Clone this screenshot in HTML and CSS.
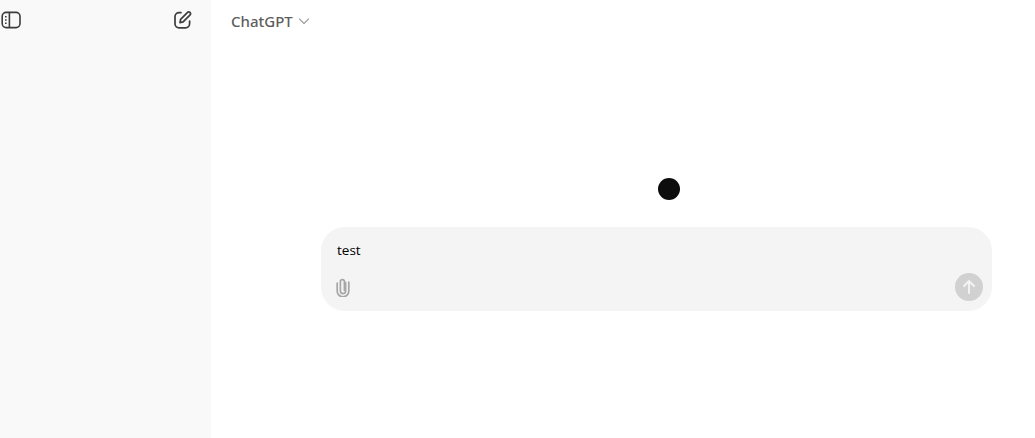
FILE: index.html
```html
<!DOCTYPE html>
<html lang="en">
<head>
  <meta charset="UTF-8">
  <title>ChatGPT</title>
  <link rel="stylesheet" href="styles.css">
</head>
<body>
  <aside class="sidebar">
    <svg class="icon" width="22" height="22" viewBox="0 0 22 22" fill="none" stroke="#3d3d3d" stroke-width="1.6">
      <rect x="2.2" y="3.4" width="17.8" height="15.2" rx="4"/>
      <path d="M9.4 3.4v15.2"/>
      <path d="M5 7.8h1.6M5 11h1.6M5 14.2h1.6" stroke-width="1.6"/>
    </svg>
    <svg class="icon" width="22" height="22" viewBox="0 0 22 22" fill="none" stroke="#3d3d3d" stroke-width="1.7" stroke-linecap="round" stroke-linejoin="round">
      <path d="M10 3.6H8a4 4 0 0 0-4 4v7.2a4 4 0 0 0 4 4h6.6a4 4 0 0 0 4-4V12"/>
      <path d="M9 13.6l.6-3.2 7-7a1.6 1.6 0 0 1 2.3 0l.2.2a1.6 1.6 0 0 1 0 2.3l-7 7z"/>
    </svg>
  </aside>

  <main class="main">
    <header class="topbar">
      <span class="model">ChatGPT</span>
      <svg width="12" height="12" viewBox="0 0 12 12" fill="none" stroke="#a3a3a3" stroke-width="1.2" stroke-linecap="round" stroke-linejoin="round">
        <path d="M1.5 4l4.5 4.5L10.5 4"/>
      </svg>
    </header>

    <div class="thread">
      <div class="dot"></div>
      <div class="composer">
        <div class="input">test</div>
        <div class="actions">
          <svg width="16" height="20" viewBox="0 0 16 20" fill="none" stroke="#a6a6a6" stroke-width="1.7" stroke-linecap="round">
            <path d="M10.6 5.5v8.6a2.6 2.6 0 0 1-5.2 0V4.6a2 2 0 0 1 4 0v8.6"/>
            <path d="M2.2 6v8a5.8 5.8 0 0 0 11.6 0V5"/>
          </svg>
          <button class="send">
            <svg width="16" height="16" viewBox="0 0 16 16" fill="none" stroke="#f4f4f4" stroke-width="1.9" stroke-linecap="round" stroke-linejoin="round">
              <path d="M8 14V2M3 7l5-5 5 5"/>
            </svg>
          </button>
        </div>
      </div>
    </div>
  </main>
</body>
</html>
```

FILE: styles.css
```css
html, body {
  height: 100%;
}

body {
  margin: 0;
  display: flex;
  overflow: hidden;
  font-family: "Noto Sans", "Open Sans", sans-serif;
  background: #fff;
  color: #000;
}

.sidebar {
  width: 211px;
  height: 100%;
  box-sizing: border-box;
  padding: 9px 18px 0 0;
  display: flex;
  justify-content: space-between;
  align-items: flex-start;
  background: #f9f9f9;
}

.main {
  flex: 1;
  display: flex;
  flex-direction: column;
}

.topbar {
  height: 41px;
  padding-left: 20px;
  display: flex;
  align-items: center;
  gap: 5px;
}

.model {
  font-size: 15px;
  font-weight: 500;
  color: #5d5d5d;
}

.thread {
  padding: 137px 43px 0 110px;
  display: flex;
  flex-direction: column;
}

.dot {
  width: 22px;
  height: 22px;
  margin-left: 337px;
  border-radius: 50%;
  background: #0d0d0d;
}

.composer {
  height: 84px;
  margin-top: 27px;
  box-sizing: border-box;
  padding: 13px 9px 10px 14px;
  display: flex;
  flex-direction: column;
  justify-content: space-between;
  border-radius: 24px;
  background: #f4f4f4;
}

.input {
  padding-left: 2px;
  font-family: "Open Sans", sans-serif;
  font-size: 13.5px;
  line-height: 20px;
}

.actions {
  display: flex;
  justify-content: space-between;
  align-items: center;
}

.send {
  width: 28px;
  height: 28px;
  padding: 0;
  display: flex;
  align-items: center;
  justify-content: center;
  border: none;
  border-radius: 50%;
  background: #d1d1d1;
}
```
